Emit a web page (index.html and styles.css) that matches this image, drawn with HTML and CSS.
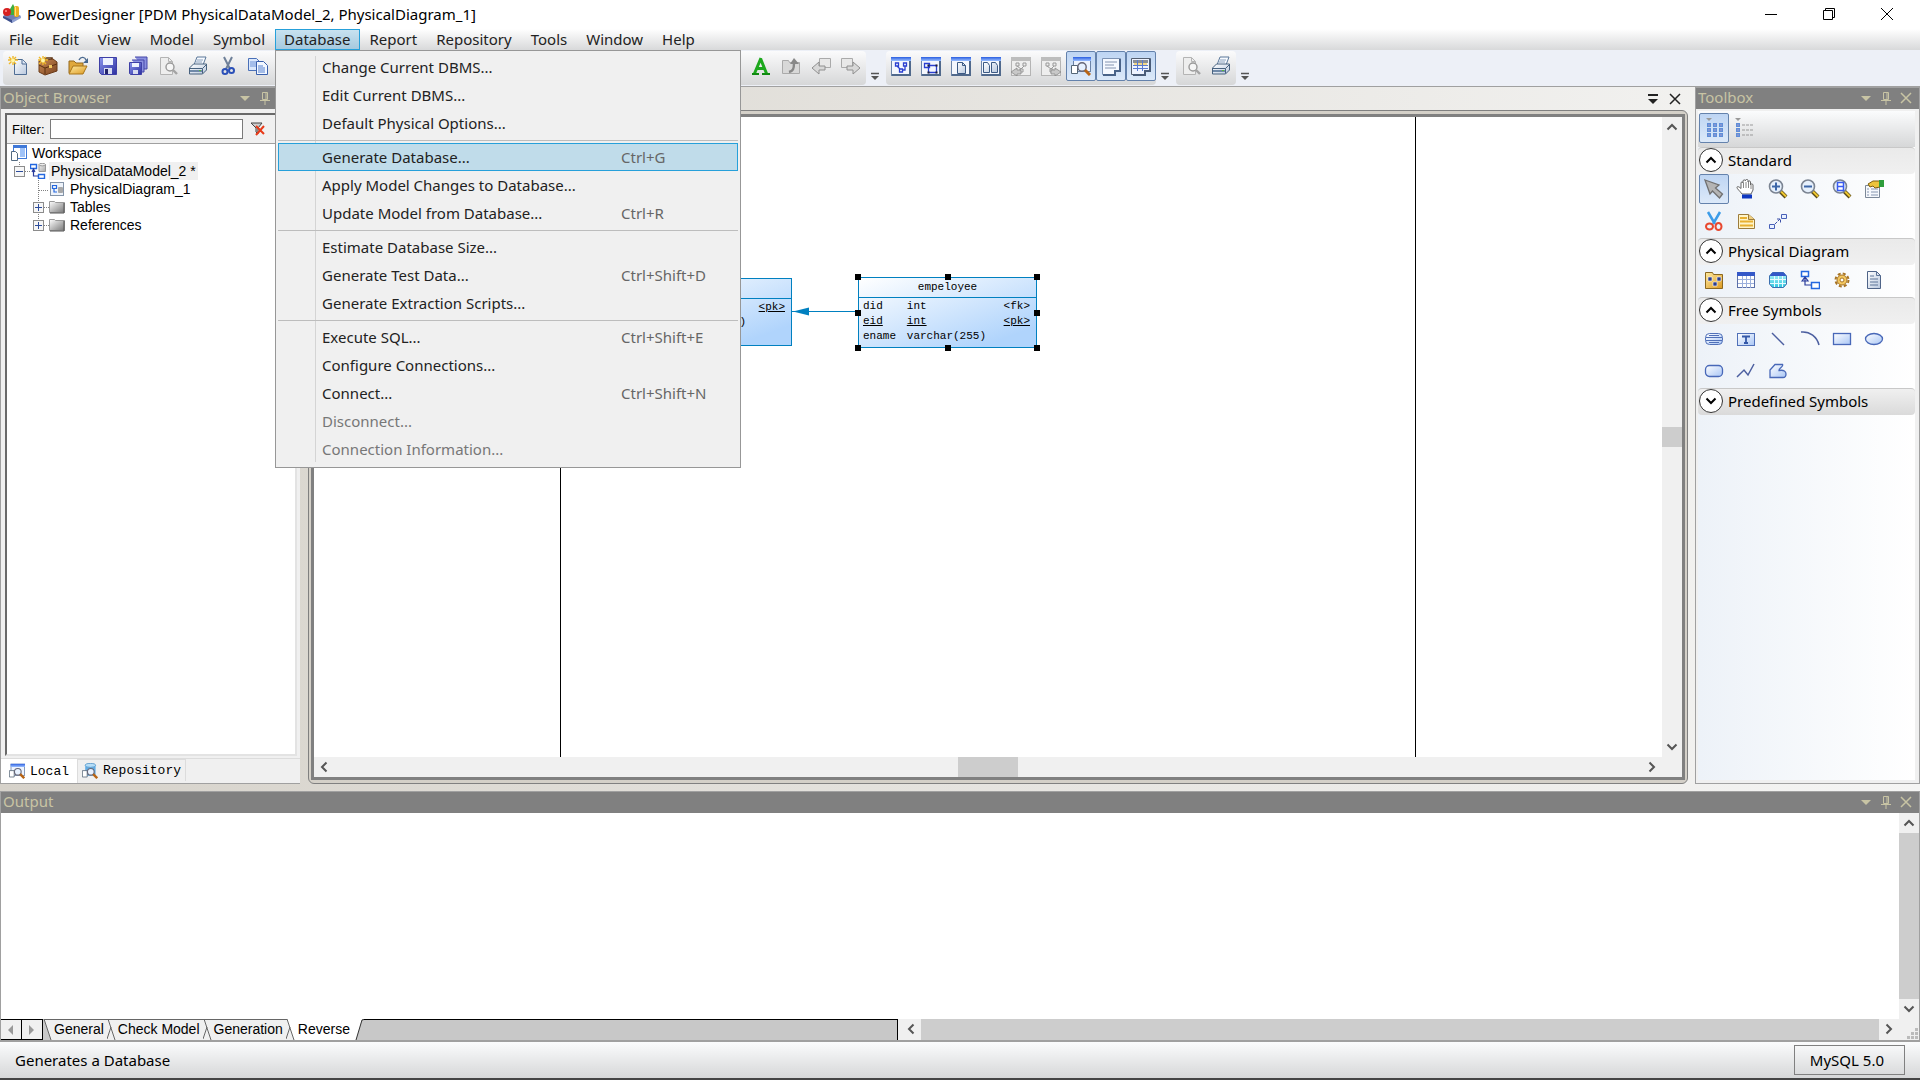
FILE: index.html
```html
<!DOCTYPE html>
<html lang="en">
<head>
	<meta charset="utf-8">
	<meta name="viewport" content="width=device-width,initial-scale=1">
	<title>PowerDesigner [PDM PhysicalDataModel_2, PhysicalDiagram_1]</title>
	<link rel="stylesheet" href="styles.css">
</head>
<body>

	<!-- icon sprite -->
	<svg class="sprite" width="0" height="0" aria-hidden="true">
		<defs>
			<linearGradient id="g-page" x1="0" y1="0" x2="1" y2="1"><stop offset="0" stop-color="#fff"/><stop offset="1" stop-color="#b9c8de"/></linearGradient>
			<linearGradient id="g-blue" x1="0" y1="0" x2="0" y2="1"><stop offset="0" stop-color="#2a5ee0"/><stop offset="1" stop-color="#9cc0ff"/></linearGradient>
			<linearGradient id="g-gold" x1="0" y1="0" x2="1" y2="1"><stop offset="0" stop-color="#ffeaa0"/><stop offset="1" stop-color="#dc9a22"/></linearGradient>
			<linearGradient id="g-brown" x1="0" y1="0" x2="1" y2="1"><stop offset="0" stop-color="#c98a55"/><stop offset="1" stop-color="#7c4420"/></linearGradient>
			<linearGradient id="g-grey" x1="0" y1="0" x2="1" y2="1"><stop offset="0" stop-color="#f4f4f4"/><stop offset="1" stop-color="#a8a8a8"/></linearGradient>
			<linearGradient id="g-disk" x1="0" y1="0" x2="1" y2="1"><stop offset="0" stop-color="#8b95ee"/><stop offset="1" stop-color="#2b2fa0"/></linearGradient>
			<linearGradient id="g-shape" x1="0" y1="0" x2="1" y2="1"><stop offset="0" stop-color="#fff"/><stop offset="1" stop-color="#a9c6f5"/></linearGradient>
			<linearGradient id="g-folder" x1="0" y1="0" x2="1" y2="1"><stop offset="0" stop-color="#fff"/><stop offset="1" stop-color="#777"/></linearGradient>
			<linearGradient id="g-cyan" x1="0" y1="0" x2="0" y2="1"><stop offset="0" stop-color="#b8f4fa"/><stop offset="1" stop-color="#2fc8e0"/></linearGradient>
		</defs>

		<symbol id="i-app" viewBox="0 0 20 20">
			<path d="M1 12l8-5 10 5-9 7z" fill="#6f7fb4"/>
			<path d="M1 12l9 4v3l-9-5z" fill="#3d4f8c"/>
			<path d="M10 16l9-4v2l-9 5z" fill="#8fa0d0"/>
			<path d="M8 5l3-5 3 6-2 5H8z" fill="#3fae3f"/>
			<rect x="12" y="2" width="5" height="11" rx="2" fill="#f0b020"/>
			<path d="M13 3h1v9h-1z" fill="#ffe080"/>
			<circle cx="5" cy="8" r="4" fill="#d62020"/>
			<circle cx="4" cy="7" r="1" fill="#ff9090"/>
		</symbol>
		<symbol id="i-star" viewBox="0 0 20 20">
			<path d="M5 0v9M0 4h10M1 1l7 7M8 1l-7 7" stroke="#f0b828" stroke-width="1.4"/>
			<circle cx="5" cy="4.500" r="2" fill="#fff6a8"/>
		</symbol>
		<symbol id="i-new" viewBox="0 0 20 20">
			<path d="M6.500 3.500h8l4 4v11h-12z" fill="url(#g-page)" stroke="#4f6d94"/>
			<path d="M14 3.500v4.500h4.500" fill="#dfe8f6" stroke="#4f6d94"/>
			<use href="#i-star"/>
		</symbol>
		<symbol id="i-case" viewBox="0 0 20 20">
			<path d="M7 4V2h7v2" fill="none" stroke="#5a3010" stroke-width="1.500"/>
			<path d="M1 5l14-2 4 3v9l-12 4-6-3z" fill="url(#g-brown)" stroke="#6a3a18"/>
			<path d="M1 9l6 3 12-4M7 12v6" stroke="#5a3010" fill="none"/>
			<rect x="11" y="9" width="3" height="3" fill="#f2c860"/>
			<use href="#i-star"/>
		</symbol>
		<symbol id="i-open" viewBox="0 0 20 20">
			<path d="M1 17V5h5l2 2h7v3" fill="#e0a83c" stroke="#94691c"/>
			<path d="M1 18l4-8h14l-4 8z" fill="url(#g-gold)" stroke="#a87418"/>
			<path d="M11 4c2-4 6-3 7 0" fill="none" stroke="#49688e" stroke-width="1.400"/>
			<path d="M20 2v5h-5z" fill="#49688e"/>
		</symbol>
		<symbol id="i-save" viewBox="0 0 20 20">
			<path d="M1.500 1.500h17v17h-15l-2-2z" fill="url(#g-disk)" stroke="#3e3fa6"/>
			<rect x="5" y="2" width="10" height="7" fill="#eef2ff"/>
			<rect x="6" y="12" width="8" height="6" fill="#d8dcf0"/>
			<rect x="7" y="13" width="3" height="5" fill="#23246c"/>
		</symbol>
		<symbol id="i-saveall" viewBox="0 0 20 20">
			<path d="M7 1h12v12h-3M4 4h12v12h-3" fill="#8a90e0" stroke="#4446a8"/>
			<path d="M1.500 6.500h12v12h-11l-1-1z" fill="url(#g-disk)" stroke="#3e3fa6"/>
			<rect x="4" y="7" width="7" height="4" fill="#eef2ff"/>
			<rect x="5" y="14" width="5" height="4" fill="#d8dcf0"/>
		</symbol>
		<symbol id="i-preview" viewBox="0 0 20 20">
			<path d="M2.500 1.500h8l4 4v13h-12z" fill="#eee" stroke="#b4b4b4"/>
			<path d="M10.500 1.500v4h4" fill="none" stroke="#b4b4b4"/>
			<circle cx="12" cy="11" r="4" fill="#f6f6f6" stroke="#999" stroke-width="1.400"/>
			<path d="M15 14l4 4" stroke="#a4a4a4" stroke-width="2.400"/>
		</symbol>
		<symbol id="i-print" viewBox="0 0 20 20">
			<path d="M6 9l3-8h9l-3 8z" fill="#f7faff" stroke="#5a7799"/>
			<path d="M9 4h6M8 6h6" stroke="#8aa0bc"/>
			<path d="M1.500 12l4-4h13v6l-4 4h-13z" fill="url(#g-page)" stroke="#48627f"/>
			<path d="M1.500 12.500h13l4-4M14.500 12.500v5" fill="none" stroke="#48627f"/>
			<path d="M2 15h12" stroke="#6f89a8" stroke-width="2"/>
			<rect x="11" y="14" width="2" height="1" fill="#58b838"/>
		</symbol>
		<symbol id="i-cut" viewBox="0 0 20 20">
			<path d="M6 1l6 12M14 1L8 13" stroke="#6f8099" stroke-width="2"/>
			<circle cx="7" cy="15.500" r="2.500" fill="none" stroke="#2b50b8" stroke-width="2"/>
			<circle cx="13.500" cy="14.500" r="2.500" fill="none" stroke="#2b50b8" stroke-width="2"/>
		</symbol>
		<symbol id="i-copy" viewBox="0 0 20 20">
			<path d="M.5 2.500h8l3 3v9H.5z" fill="#dbe8fc" stroke="#4a70b8"/>
			<path d="M2 6h6M2 8h6M2 10h6" stroke="#6d92d8"/>
			<path d="M8.500 5.500h7l4 4v9h-11z" fill="#f2f7ff" stroke="#3a60ac"/>
			<path d="M10 10h5M10 12h7M10 14h7M10 16h7" stroke="#5580d0"/>
		</symbol>
		<symbol id="i-font" viewBox="0 0 20 20">
			<path d="M10 2L3.500 17.500M9.500 2.500l6 15M6 12.500h8" stroke="#1da81d" stroke-width="3" fill="none"/>
			<path d="M1 18h7M11 18h8" stroke="#118a11" stroke-width="2"/>
		</symbol>
		<symbol id="i-up" viewBox="0 0 20 20">
			<path d="M1.500 4.500h6l1 2h10v11h-17z" fill="#d8d8d8" stroke="#aaa"/>
			<path d="M8 16c4-1 5-3 5-9" fill="none" stroke="#888" stroke-width="2.400"/>
			<path d="M9 8l4-6 5 6z" fill="#888"/>
		</symbol>
		<symbol id="i-back" viewBox="0 0 20 20">
			<path d="M8.500 2.500h11v9h-11z" fill="#e8e8e8" stroke="#aaa"/>
			<path d="M1 12l7-6v4h6v4H8v4z" fill="#d8d8d8" stroke="#909090"/>
		</symbol>
		<symbol id="i-fwd" viewBox="0 0 20 20">
			<path d="M.5 2.500h11v9H.5z" fill="#e8e8e8" stroke="#aaa"/>
			<path d="M19 12l-7-6v4H6v4h6v4z" fill="#d8d8d8" stroke="#909090"/>
		</symbol>
		<symbol id="i-win" viewBox="0 0 20 20">
			<rect x=".5" y="1.500" width="19" height="18" fill="#f4f7fd" stroke="#6c84a8"/>
			<rect x="0" y="1" width="20" height="4" fill="url(#g-blue)"/>
			<path d="M19 5v14H1" fill="none" stroke="#50698c" stroke-width="2"/>
		</symbol>
		<symbol id="i-winoff" viewBox="0 0 20 20">
			<rect x=".5" y="1.500" width="19" height="18" fill="#eee" stroke="#b4b4b4"/>
			<rect x="0" y="1" width="20" height="4" fill="#bdbdbd"/>
			<path d="M5 7h3v3H5zM12 7h3v3h-3zM9 13h3v3H9zM6 10l4 3 3-3" fill="none" stroke="#999"/>
		</symbol>
		<symbol id="i-dgm" viewBox="0 0 20 20"><use href="#i-win"/><path d="M4.500 7h3v3h-3zM12.500 7h3v3h-3zM8.500 13h3v3h-3zM6 10l3 3M14 10v4h-2" fill="none" stroke="#2a3fd0" stroke-width="1.300"/></symbol>
		<symbol id="i-dgmsel" viewBox="0 0 20 20"><use href="#i-win"/><path d="M3.500 7.500h5v4h-5zM7.500 9.500h8v7h-8z" fill="none" stroke="#2a3fd0" stroke-width="1.300"/><path d="M6.500 8.500h2v2h-2zM14.500 8.500h2v2h-2zM6.500 15.500h2v2h-2zM14.500 15.500h2v2h-2z" fill="#223"/></symbol>
		<symbol id="i-dgmpage" viewBox="0 0 20 20"><use href="#i-win"/><path d="M6.500 6.500h5l3 3v8h-8z" fill="url(#g-page)" stroke="#3c5a84"/><path d="M11.500 6.500v3h3" fill="none" stroke="#3c5a84"/></symbol>
		<symbol id="i-dgmpages" viewBox="0 0 20 20"><use href="#i-win"/><path d="M2.500 6.500h4l2 3v7h-6zM10.500 6.500h4l2 3v7h-6z" fill="url(#g-page)" stroke="#3c5a84"/></symbol>
		<symbol id="i-prevoff" viewBox="0 0 20 20"><use href="#i-winoff"/><path d="M0 16l6-4v2h4v4H6v2z" fill="#c8c8c8" stroke="#888" stroke-width=".8"/></symbol>
		<symbol id="i-nextoff" viewBox="0 0 20 20"><use href="#i-winoff"/><path d="M20 16l-6-4v2h-4v4h4v2z" fill="#c8c8c8" stroke="#888" stroke-width=".8"/></symbol>
		<symbol id="i-browse" viewBox="0 0 20 20">
			<rect x="2.500" y="1.500" width="17" height="14" fill="#eef4ff" stroke="#6c84a8"/>
			<rect x="2" y="1" width="18" height="4" fill="url(#g-blue)"/>
			<path d="M.5 9.500h6v8h-6z" fill="#fff" stroke="#567"/>
			<circle cx="11" cy="11" r="4.200" fill="#e8f2ff" stroke="#667" stroke-width="1.400"/>
			<path d="M14 14l5 5" stroke="#b86414" stroke-width="3"/>
		</symbol>
		<symbol id="i-repo" viewBox="0 0 20 20">
			<path d="M4 3v13h13V3z" fill="#62aee6"/>
			<ellipse cx="10.500" cy="3" rx="6.500" ry="2.500" fill="#b6def8" stroke="#4a90c8"/>
			<path d="M.5 9.500h6v8h-6z" fill="#fff" stroke="#567"/>
			<circle cx="11" cy="11" r="4.200" fill="#e8f2ff" stroke="#667" stroke-width="1.400"/>
			<path d="M14 14l5 5" stroke="#b86414" stroke-width="3"/>
		</symbol>
		<symbol id="i-output" viewBox="0 0 20 20">
			<path d="M1.500 2.500h18v13h-5v3h-13z" fill="#f6f9ff" stroke="#7d93b4"/>
			<path d="M19 3v12h-5v4H2" fill="none" stroke="#4a6388" stroke-width="2"/>
			<path d="M4 6h12M4 9h9M4 12h11" stroke="#8494b0"/>
		</symbol>
		<symbol id="i-result" viewBox="0 0 20 20">
			<path d="M.5 2.500h19v13h-5v3H.5z" fill="#eef3ff" stroke="#555f70"/>
			<path d="M19 3v12h-5v4H2" fill="none" stroke="#4a5c78" stroke-width="2"/>
			<rect x="2" y="4" width="15" height="3" fill="#8a8f98"/>
			<path d="M2 9.500h15M2 12.500h15M6.500 4v11M11.500 4v11" stroke="#5b7bd0"/>
			<path d="M3 7h3v2H3zM7 7h4v2H7zM12 7h4v2h-4z" fill="#f4d888"/>
		</symbol>
		<symbol id="i-more" viewBox="0 0 10 10"><path d="M1 1.500h8" stroke="#555" stroke-width="1.500"/><path d="M1 4h8L5 8z" fill="#555"/></symbol>
		<symbol id="i-down" viewBox="0 0 12 12"><path d="M1 4h10L6 9z" fill="#c8c4a4"/></symbol>
		<symbol id="i-pin" viewBox="0 0 12 14"><path d="M3.500 1.500h5v7h-5zM1 9.500h10M6 10v4M7 2v6" fill="none" stroke="#c8c4a4"/></symbol>
		<symbol id="i-x" viewBox="0 0 12 12"><path d="M1 1l10 10M11 1L1 11" fill="none" stroke="currentColor" stroke-width="1.500"/></symbol>
		<symbol id="i-chev" viewBox="0 0 12 12"><path d="M1.500 8.500L6 4l4.500 4.500" fill="none" stroke="currentColor" stroke-width="2"/></symbol>

		<symbol id="i-workspace" viewBox="0 0 16 16">
			<rect x="2.500" y=".5" width="13" height="13" fill="#fff" stroke="#3f78d8"/>
			<rect x="2" y="0" width="14" height="3" fill="#3f78d8"/>
			<rect x="9" y="3" width="5" height="9" fill="#9fc2f8"/>
			<path d="M.5 6.500h4l2 2v7h-6z" fill="#fff" stroke="#546a80"/>
		</symbol>
		<symbol id="i-pdm" viewBox="0 0 16 16">
			<path d="M.5 1.500h6v4h-6zM8.500 11.500h6v4h-6z" fill="#fff" stroke="#2468e0" stroke-width="1.400"/>
			<path d="M3.500 6v7h5M2 9l1.500-3L5 9" fill="none" stroke="#2a3c9c" stroke-width="1.200"/>
			<path d="M9 1.500h6.500v7H9z" fill="url(#g-grey)" stroke="#999"/>
			<ellipse cx="12.200" cy="1.600" rx="3.200" ry="1.300" fill="#eee" stroke="#999"/>
		</symbol>
		<symbol id="i-diagram" viewBox="0 0 16 16">
			<rect x="1.500" y="1.500" width="13" height="13" fill="#eef3fa" stroke="#8494a8"/>
			<path d="M3.500 4.500h4v3h-4zM5 8v3h3" fill="none" stroke="#2468e0" stroke-width="1.200"/>
			<rect x="9" y="6" width="5" height="6" rx="1" fill="#a8a8a8"/>
		</symbol>
		<symbol id="i-folder" viewBox="0 0 16 16"><path d="M.5 13.500v-11h5l1 1h9v10z" fill="url(#g-folder)" stroke="#999"/><path d="M15 4v10H1" stroke="#555" fill="none"/></symbol>
		<symbol id="i-funnel" viewBox="0 0 16 16">
			<path d="M1 2h11L8 7v6l-2-2V7z" fill="#ccc" stroke="#444"/>
			<path d="M6 5l8 8M14 5l-8 9" stroke="#e83a18" stroke-width="2"/>
		</symbol>
		<symbol id="t-minus" viewBox="0 0 19 18">
			<path d="M8.500 0v4M14 9.500h5" stroke="#808080" stroke-dasharray="1 1"/>
			<rect x="3.500" y="4.500" width="10" height="10" fill="#f6f6f6" stroke="#8c8c8c"/>
			<path d="M5 9.500h7" stroke="#2c4c9c"/>
		</symbol>
		<symbol id="t-plus" viewBox="0 0 19 18">
			<path d="M8.500 0v18M14 9.500h5" stroke="#808080" stroke-dasharray="1 1"/>
			<rect x="3.500" y="4.500" width="10" height="10" fill="#f6f6f6" stroke="#8c8c8c"/>
			<path d="M5 9.500h7M8.500 6v7" stroke="#2c4c9c"/>
		</symbol>
		<symbol id="t-last" viewBox="0 0 19 18">
			<path d="M8.500 0v4M14 9.500h5" stroke="#808080" stroke-dasharray="1 1"/>
			<rect x="3.500" y="4.500" width="10" height="10" fill="#f6f6f6" stroke="#8c8c8c"/>
			<path d="M5 9.500h7M8.500 6v7" stroke="#2c4c9c"/>
		</symbol>
		<symbol id="t-line" viewBox="0 0 19 18"><path d="M8.500 0v18M9 10.500h10" stroke="#808080" stroke-dasharray="1 1"/></symbol>

		<symbol id="i-icons" viewBox="0 0 20 20">
			<path d="M2 0h6L5 3z" fill="#999"/>
			<path d="M3 5h4v4H3zM9 5h4v4H9zM15 5h4v4h-4zM3 10h4v4H3zM9 10h4v4H9zM15 10h4v4h-4zM3 15h4v4H3zM9 15h4v4H9zM15 15h4v4h-4z" fill="#5f8fd8"/>
			<path d="M4.500 6.500h1v1h-1zM10.500 6.500h1v1h-1zM16.500 6.500h1v1h-1zM4.500 11.500h1v1h-1zM10.500 11.500h1v1h-1zM16.500 11.500h1v1h-1zM4.500 16.500h1v1h-1zM10.500 16.500h1v1h-1zM16.500 16.500h1v1h-1z" fill="#f0a8c8"/>
		</symbol>
		<symbol id="i-list" viewBox="0 0 20 20">
			<path d="M0 0h6L3 3z" fill="#999"/>
			<path d="M1 5h4v4H1zM1 10h4v4H1zM1 15h4v4H1z" fill="#5f8fd8"/>
			<path d="M2.500 6.500h1v1h-1zM2.500 11.500h1v1h-1zM2.500 16.500h1v1h-1z" fill="#f0a8c8"/>
			<path d="M7 7h12M7 12h12M7 17h12" stroke="#999" stroke-dasharray="3 1"/>
		</symbol>
		<symbol id="i-pointer" viewBox="0 0 20 20"><path d="M1 1l14 5-3.500 3 7 6-3 4-7-7L6 15z" fill="#b4b4b4" stroke="#707070" stroke-width="1.300"/></symbol>
		<symbol id="i-hand" viewBox="0 0 20 20">
			<path d="M6 15c-2-3-5-5-5-6.500s2-1 4 1V4c0-1.500 2-1.500 2 0V2c0-1.500 2.500-1.500 2.500 0v-.5c0-1.500 2.500-1.500 2.500 0V3c0-1.500 2.500-1.500 2.500 0v3c0-1.500 2.500-1.500 2.500 0v5l-2 4z" fill="#fff" stroke="#666"/>
			<path d="M7.500 4v5M10 3v6M12.500 3v6M15 6v4" stroke="#888"/>
			<rect x="6" y="15.500" width="10" height="4" fill="#1038c0"/>
		</symbol>
		<symbol id="i-glass" viewBox="0 0 20 20">
			<path d="M12 12l6 6" stroke="#5a4a18" stroke-width="4"/><path d="M13 12.500l5 5" stroke="#f0c830" stroke-width="2"/>
			<circle cx="8" cy="7.500" r="6.500" fill="#e6f0fc" stroke="#7b8492" stroke-width="1.600"/>
		</symbol>
		<symbol id="i-zin" viewBox="0 0 20 20"><use href="#i-glass"/><path d="M4 7.500h8M8 3.500v8" stroke="#3c66a8" stroke-width="2"/></symbol>
		<symbol id="i-zout" viewBox="0 0 20 20"><use href="#i-glass"/><path d="M4 7.500h8" stroke="#3c66a8" stroke-width="2"/></symbol>
		<symbol id="i-zpage" viewBox="0 0 20 20"><use href="#i-glass"/><path d="M5.500 3.500h6v8h-6zM5.500 7.500h6" stroke="#3a5cf0" stroke-width="1.500" fill="#fff"/></symbol>
		<symbol id="i-props" viewBox="0 0 20 20">
			<path d="M1.500 6.500h14v12h-14z" fill="#f6f8fc" stroke="#7c8898"/>
			<path d="M3 10h2M7 10h7M3 13h2M7 13h7M3 16h2M7 16h7" stroke="#8696b0"/>
			<path d="M4 5l5-3 7 0v6l-5 1-2-2-3 1z" fill="#ecc43c" stroke="#806010"/>
			<path d="M15 1h5v7h-5z" fill="#2f9e3c"/>
		</symbol>
		<symbol id="i-delete" viewBox="0 0 20 20">
			<path d="M4 1l7 12M16 1L9 13" stroke="#3c9ce8" stroke-width="2.500"/>
			<ellipse cx="5.500" cy="15.500" rx="3.500" ry="3" fill="none" stroke="#e84830" stroke-width="2"/>
			<ellipse cx="14.500" cy="15.500" rx="3" ry="3.500" fill="none" stroke="#e84830" stroke-width="2"/>
		</symbol>
		<symbol id="i-note" viewBox="0 0 20 20">
			<path d="M2.500 3.500h10l6 5v9h-16z" fill="#fff4c8" stroke="#9c7c3c"/>
			<path d="M12.500 3.500v5h6" fill="#f0d080" stroke="#9c7c3c"/>
			<path d="M4 7h7M4 10.500h13M4 14.500h13" stroke="#e8b030" stroke-width="2"/>
		</symbol>
		<symbol id="i-link" viewBox="0 0 20 20"><path d="M1.500 13.500h5v4h-5zM13.500 3.500h5v4h-5z" fill="#e8f0ff" stroke="#4860b8"/><path d="M7 13l5-5M9 8h3.500v3.500" fill="none" stroke="#3c50a8" stroke-dasharray="3 1"/></symbol>
		<symbol id="i-package" viewBox="0 0 20 20">
			<path d="M1.500 18.500v-16h7l1 2h9v14z" fill="url(#g-gold)" stroke="#8c6820"/>
			<path d="M4 7h4v4H4zM13 7h4v4h-4zM9 12h4v4H9z" fill="#2c3c8c" stroke="#fff" stroke-width=".6"/>
		</symbol>
		<symbol id="i-table" viewBox="0 0 20 20">
			<rect x="1.500" y="2.500" width="17" height="15" fill="#fff" stroke="#5c70a8"/>
			<rect x="1" y="2" width="18" height="4" fill="#3458c8"/>
			<path d="M2 9.500h16M2 13.500h16M6.500 6v12M10.500 6v12M14.500 6v12" stroke="#9cb0dc"/>
		</symbol>
		<symbol id="i-view" viewBox="0 0 20 20">
			<path d="M1.500 6l3-3.500h11l3 3.500v8l-3 3.500h-11l-3-3.500z" fill="url(#g-cyan)" stroke="#3c70b0"/>
			<path d="M1.500 6l3-3.500h11l3 3.500z" fill="#3458c8"/>
			<path d="M2 9.500h16M2 13.500h16M6.500 6v11M10.500 6v11M14.500 6v11" stroke="#e8fcff"/>
		</symbol>
		<symbol id="i-ref" viewBox="0 0 20 20">
			<path d="M1.500 1.500h7v5h-7zM11.500 12.500h8v6h-8z" fill="#fff" stroke="#2468e0" stroke-width="1.500"/>
			<path d="M5 7v8h6M2 11l3-4 3 4z" fill="none" stroke="#2a3c9c" stroke-width="1.200"/>
		</symbol>
		<symbol id="i-proc" viewBox="0 0 20 20">
			<circle cx="10" cy="10" r="6.500" fill="none" stroke="#a87424" stroke-width="2" stroke-dasharray="3 2.100"/>
			<circle cx="10" cy="10" r="5" fill="#f4c860" stroke="#a87424"/>
			<circle cx="10" cy="10" r="2" fill="#fff" stroke="#a87424"/>
		</symbol>
		<symbol id="i-file" viewBox="0 0 20 20">
			<path d="M3.500 1.500h9l4 4v13h-13z" fill="url(#g-page)" stroke="#4f6488"/>
			<path d="M12.500 1.500v4h4M6 6h4M6 9h8M6 12h8M6 15h8" fill="none" stroke="#5c7498"/>
		</symbol>
		<symbol id="i-title" viewBox="0 0 20 20">
			<rect x="1.500" y="4.500" width="17" height="11" rx="4" fill="url(#g-shape)" stroke="#5070b8"/>
			<path d="M2 8.500h16M2 11.500h16M5 6.500h10M5 13.500h10" stroke="#5070b8"/>
		</symbol>
		<symbol id="i-text" viewBox="0 0 20 20"><rect x="1.500" y="4.500" width="17" height="12" fill="url(#g-shape)" stroke="#5070b8"/><path d="M6 7.500h8M10 7.500v7M8 14h4" stroke="#3458a8" stroke-width="1.800"/></symbol>
		<symbol id="i-line" viewBox="0 0 20 20"><path d="M4 4l12 12" stroke="#4c5fa0" stroke-width="1.500"/></symbol>
		<symbol id="i-arc" viewBox="0 0 20 20"><path d="M1 3c9-1 16 5 18 13" fill="none" stroke="#4c5fa0" stroke-width="1.500"/></symbol>
		<symbol id="i-rect" viewBox="0 0 20 20"><rect x="1.500" y="4.500" width="17" height="11" fill="url(#g-shape)" stroke="#4868b8" stroke-width="1.300"/></symbol>
		<symbol id="i-ell" viewBox="0 0 20 20"><ellipse cx="10" cy="10" rx="8.500" ry="5.500" fill="url(#g-shape)" stroke="#4868b8" stroke-width="1.300"/></symbol>
		<symbol id="i-rrect" viewBox="0 0 20 20"><rect x="1.500" y="4.500" width="17" height="11" rx="4" fill="url(#g-shape)" stroke="#4868b8" stroke-width="1.300"/></symbol>
		<symbol id="i-poly" viewBox="0 0 20 20"><path d="M1 16l7-7 4 5 6-11" fill="none" stroke="#4c5fa0" stroke-width="1.500"/></symbol>
		<symbol id="i-polygon" viewBox="0 0 20 20"><path d="M2 16.500V9l5-5.500h7.500c1.500 2-3.500 3-3.500 6 5-1 7 1 7 3.500s-1 3.500-3 3.500z" fill="url(#g-shape)" stroke="#4868b8" stroke-width="1.300"/></symbol>
	</svg>

	<header class="titlebar">
		<svg class="ico"><use href="#i-app"/></svg>
		<h1>PowerDesigner [PDM PhysicalDataModel_2, PhysicalDiagram_1]</h1>
		<div class="window-buttons">
			<button aria-label="Minimize"><svg width="12" height="12"><path d="M0 6.500h12" stroke="#000"/></svg></button>
			<button aria-label="Restore"><svg width="12" height="12" fill="none" stroke="#000"><path d="M.5 2.500h9v9h-9zM2.500 2.500v-2h9v9h-2"/></svg></button>
			<button aria-label="Close"><svg width="12" height="12"><path d="M0 0l12 12M12 0L0 12" stroke="#000"/></svg></button>
		</div>
	</header>

	<nav class="menubar">
		<button>File</button>
		<button>Edit</button>
		<button>View</button>
		<button>Model</button>
		<button>Symbol</button>
		<div class="menu-holder">
			<button class="open">Database</button>
			<div class="menu">
				<button>Change Current DBMS...</button>
				<button>Edit Current DBMS...</button>
				<button>Default Physical Options...</button>
				<hr>
				<button class="hot">Generate Database...<kbd>Ctrl+G</kbd></button>
				<button>Apply Model Changes to Database...</button>
				<button>Update Model from Database...<kbd>Ctrl+R</kbd></button>
				<hr>
				<button>Estimate Database Size...</button>
				<button>Generate Test Data...<kbd>Ctrl+Shift+D</kbd></button>
				<button>Generate Extraction Scripts...</button>
				<hr>
				<button>Execute SQL...<kbd>Ctrl+Shift+E</kbd></button>
				<button>Configure Connections...</button>
				<button>Connect...<kbd>Ctrl+Shift+N</kbd></button>
				<button disabled>Disconnect...</button>
				<button disabled>Connection Information...</button>
			</div>
		</div>
		<button>Report</button>
		<button>Repository</button>
		<button>Tools</button>
		<button>Window</button>
		<button>Help</button>
	</nav>

	<div class="toolbars">
		<div class="toolbar toolbar-main">
			<div class="tools">
				<button aria-label="New Model"><svg class="ico"><use href="#i-new"/></svg></button>
				<button aria-label="New Project"><svg class="ico"><use href="#i-case"/></svg></button>
				<button aria-label="Open"><svg class="ico"><use href="#i-open"/></svg></button>
				<button aria-label="Save"><svg class="ico"><use href="#i-save"/></svg></button>
				<button aria-label="Save All"><svg class="ico"><use href="#i-saveall"/></svg></button>
				<button aria-label="Print Preview"><svg class="ico"><use href="#i-preview"/></svg></button>
				<button aria-label="Print"><svg class="ico"><use href="#i-print"/></svg></button>
				<button aria-label="Cut"><svg class="ico"><use href="#i-cut"/></svg></button>
				<button aria-label="Copy"><svg class="ico"><use href="#i-copy"/></svg></button>
			</div>
			<div class="tools">
				<button aria-label="Font"><svg class="ico"><use href="#i-font"/></svg></button>
				<button aria-label="Up One Level"><svg class="ico"><use href="#i-up"/></svg></button>
				<button aria-label="Back"><svg class="ico"><use href="#i-back"/></svg></button>
				<button aria-label="Forward"><svg class="ico"><use href="#i-fwd"/></svg></button>
			</div>
		</div>
		<button class="more" aria-label="Toolbar options"><svg width="10" height="10"><use href="#i-more"/></svg></button>
		<div class="toolbar">
			<button aria-label="Diagram"><svg class="ico"><use href="#i-dgm"/></svg></button>
			<button aria-label="Selection"><svg class="ico"><use href="#i-dgmsel"/></svg></button>
			<button aria-label="Page"><svg class="ico"><use href="#i-dgmpage"/></svg></button>
			<button aria-label="Pages"><svg class="ico"><use href="#i-dgmpages"/></svg></button>
			<button aria-label="Previous View"><svg class="ico"><use href="#i-prevoff"/></svg></button>
			<button aria-label="Next View"><svg class="ico"><use href="#i-nextoff"/></svg></button>
			<button class="on" aria-label="Browser"><svg class="ico"><use href="#i-browse"/></svg></button>
			<button class="on" aria-label="Output"><svg class="ico"><use href="#i-output"/></svg></button>
			<button class="on" aria-label="Result List"><svg class="ico"><use href="#i-result"/></svg></button>
		</div>
		<button class="more" aria-label="Toolbar options"><svg width="10" height="10"><use href="#i-more"/></svg></button>
		<div class="toolbar">
			<button aria-label="Print Preview"><svg class="ico"><use href="#i-preview"/></svg></button>
			<button aria-label="Print"><svg class="ico"><use href="#i-print"/></svg></button>
		</div>
		<button class="more" aria-label="Toolbar options"><svg width="10" height="10"><use href="#i-more"/></svg></button>
	</div>

	<main class="workspace">
		<section class="browser">
			<div class="panel-head">
				<h2>Object Browser</h2>
				<button aria-label="Menu"><svg width="12" height="12"><use href="#i-down"/></svg></button>
				<button aria-label="Pin"><svg width="12" height="14"><use href="#i-pin"/></svg></button>
				<button aria-label="Close"><svg width="12" height="12"><use href="#i-x"/></svg></button>
			</div>
			<div class="browser-body">
				<div class="filter">
					<label for="filter">Filter:</label>
					<input type="text" id="filter">
					<button aria-label="Clear filter"><svg width="16" height="16"><use href="#i-funnel"/></svg></button>
				</div>
				<ul class="tree">
					<li><svg width="16" height="16"><use href="#i-workspace"/></svg><span>Workspace</span></li>
					<li><svg width="19" height="18"><use href="#t-minus"/></svg><svg width="16" height="16"><use href="#i-pdm"/></svg><span class="current">PhysicalDataModel_2 *</span></li>
					<li class="child"><svg width="19" height="18"><use href="#t-line"/></svg><svg width="16" height="16"><use href="#i-diagram"/></svg><span>PhysicalDiagram_1</span></li>
					<li class="child"><svg width="19" height="18"><use href="#t-plus"/></svg><svg width="16" height="16"><use href="#i-folder"/></svg><span>Tables</span></li>
					<li class="child"><svg width="19" height="18"><use href="#t-last"/></svg><svg width="16" height="16"><use href="#i-folder"/></svg><span>References</span></li>
				</ul>
			</div>
			<div class="browser-tabs">
				<button class="active"><svg width="16" height="16"><use href="#i-browse"/></svg>Local</button>
				<button><svg width="16" height="16"><use href="#i-repo"/></svg>Repository</button>
			</div>
		</section>

		<section class="document">
			<div class="doc-head">
				<button aria-label="Windows"><svg width="12" height="12"><path d="M1 2h10" stroke="#222" stroke-width="2"/><path d="M1 6h10l-5 5z" fill="#222"/></svg></button>
				<button aria-label="Close"><svg width="12" height="12"><use href="#i-x"/></svg></button>
			</div>
			<div class="frame">
				<div class="view">
					<div class="canvas">
						<div class="page-line line-left"></div>
						<div class="page-line line-right"></div>
						<svg class="reference" width="66" height="10"><path d="M0 5.500h66" stroke="#0080c0"/><path d="M1 5.500l16-4v8z" fill="#0080c0"/></svg>
						<table class="entity entity-parent">
							<tr><th colspan="2">&nbsp;</th></tr>
							<tr><td></td><td class="key"><u>&lt;pk&gt;</u></td></tr>
							<tr><td class="type">)</td><td></td></tr>
							<tr><td>&nbsp;</td><td></td></tr>
						</table>
						<div class="selected">
							<table class="entity">
								<tr><th colspan="3">empeloyee</th></tr>
								<tr><td>did</td><td>int</td><td class="key">&lt;fk&gt;</td></tr>
								<tr><td><u>eid</u></td><td><u>int</u></td><td class="key"><u>&lt;pk&gt;</u></td></tr>
								<tr><td>ename</td><td>varchar(255)</td><td></td></tr>
							</table>
							<i class="handle t l"></i><i class="handle t c"></i><i class="handle t r"></i>
							<i class="handle m l"></i><i class="handle m r"></i>
							<i class="handle b l"></i><i class="handle b c"></i><i class="handle b r"></i>
						</div>
					</div>
					<div class="vscroll">
						<button aria-label="Scroll up"><svg width="12" height="12"><use href="#i-chev"/></svg></button>
						<div class="track-before"></div>
						<div class="thumb"></div>
						<div class="track-after"></div>
						<button class="turn-down" aria-label="Scroll down"><svg width="12" height="12"><use href="#i-chev"/></svg></button>
					</div>
					<div class="hscroll">
						<button class="turn-left" aria-label="Scroll left"><svg width="12" height="12"><use href="#i-chev"/></svg></button>
						<div class="track-before"></div>
						<div class="thumb"></div>
						<div class="track-after"></div>
						<button class="turn-right" aria-label="Scroll right"><svg width="12" height="12"><use href="#i-chev"/></svg></button>
					</div>
				</div>
			</div>
		</section>

		<section class="toolbox">
			<div class="panel-head">
				<h2>Toolbox</h2>
				<button aria-label="Menu"><svg width="12" height="12"><use href="#i-down"/></svg></button>
				<button aria-label="Pin"><svg width="12" height="14"><use href="#i-pin"/></svg></button>
				<button aria-label="Close"><svg width="12" height="12"><use href="#i-x"/></svg></button>
			</div>
			<div class="toolbox-body">
				<div class="toolbox-views">
					<button class="on" aria-label="Icons"><svg class="ico"><use href="#i-icons"/></svg></button>
					<button aria-label="List"><svg class="ico"><use href="#i-list"/></svg></button>
				</div>
				<button class="group"><span class="round"><svg width="12" height="12"><use href="#i-chev"/></svg></span>Standard</button>
				<div class="palette">
					<button class="on" aria-label="Pointer"><svg class="ico"><use href="#i-pointer"/></svg></button>
					<button aria-label="Grabber"><svg class="ico"><use href="#i-hand"/></svg></button>
					<button aria-label="Zoom In"><svg class="ico"><use href="#i-zin"/></svg></button>
					<button aria-label="Zoom Out"><svg class="ico"><use href="#i-zout"/></svg></button>
					<button aria-label="Global View"><svg class="ico"><use href="#i-zpage"/></svg></button>
					<button aria-label="Properties"><svg class="ico"><use href="#i-props"/></svg></button>
					<button aria-label="Delete"><svg class="ico"><use href="#i-delete"/></svg></button>
					<button aria-label="Note"><svg class="ico"><use href="#i-note"/></svg></button>
					<button aria-label="Link"><svg class="ico"><use href="#i-link"/></svg></button>
				</div>
				<button class="group"><span class="round"><svg width="12" height="12"><use href="#i-chev"/></svg></span>Physical Diagram</button>
				<div class="palette">
					<button aria-label="Package"><svg class="ico"><use href="#i-package"/></svg></button>
					<button aria-label="Table"><svg class="ico"><use href="#i-table"/></svg></button>
					<button aria-label="View"><svg class="ico"><use href="#i-view"/></svg></button>
					<button aria-label="Reference"><svg class="ico"><use href="#i-ref"/></svg></button>
					<button aria-label="Procedure"><svg class="ico"><use href="#i-proc"/></svg></button>
					<button aria-label="File"><svg class="ico"><use href="#i-file"/></svg></button>
				</div>
				<button class="group"><span class="round"><svg width="12" height="12"><use href="#i-chev"/></svg></span>Free Symbols</button>
				<div class="palette">
					<button aria-label="Title"><svg class="ico"><use href="#i-title"/></svg></button>
					<button aria-label="Text"><svg class="ico"><use href="#i-text"/></svg></button>
					<button aria-label="Line"><svg class="ico"><use href="#i-line"/></svg></button>
					<button aria-label="Arc"><svg class="ico"><use href="#i-arc"/></svg></button>
					<button aria-label="Rectangle"><svg class="ico"><use href="#i-rect"/></svg></button>
					<button aria-label="Ellipse"><svg class="ico"><use href="#i-ell"/></svg></button>
					<button aria-label="Rounded Rectangle"><svg class="ico"><use href="#i-rrect"/></svg></button>
					<button aria-label="Polyline"><svg class="ico"><use href="#i-poly"/></svg></button>
					<button aria-label="Polygon"><svg class="ico"><use href="#i-polygon"/></svg></button>
				</div>
				<button class="group closed"><span class="round turn-down"><svg width="12" height="12"><use href="#i-chev"/></svg></span>Predefined Symbols</button>
			</div>
		</section>
	</main>

	<section class="output">
		<div class="panel-head">
			<h2>Output</h2>
			<button aria-label="Menu"><svg width="12" height="12"><use href="#i-down"/></svg></button>
			<button aria-label="Pin"><svg width="12" height="14"><use href="#i-pin"/></svg></button>
			<button aria-label="Close"><svg width="12" height="12"><use href="#i-x"/></svg></button>
		</div>
		<div class="output-body">
			<div class="log"></div>
			<div class="vscroll">
				<button aria-label="Scroll up"><svg width="12" height="12"><use href="#i-chev"/></svg></button>
				<div class="thumb"></div>
				<button class="turn-down" aria-label="Scroll down"><svg width="12" height="12"><use href="#i-chev"/></svg></button>
			</div>
		</div>
		<div class="output-foot">
			<div class="sheet-tabs">
				<button class="step" aria-label="Previous tab"><svg width="8" height="10"><path d="M6 0v10L1 5z" fill="#999"/></svg></button>
				<button class="step" aria-label="Next tab"><svg width="8" height="10"><path d="M1 0v10l5-5z" fill="#999"/></svg></button>
				<svg class="slant" width="9" height="21"><path d="M1 0h8v21H8z" fill="#f0f0f0"/><path d="M1 0l7 21M1 .5h8" fill="none" stroke="#666"/></svg>
				<button class="sheet">General</button>
				<svg class="slant" width="9" height="21"><path d="M0 0h9v21H0z" fill="#f0f0f0"/><path d="M1 0l7 21M0 20l4-12M0 .5h9" fill="none" stroke="#666"/></svg>
				<button class="sheet">Check Model</button>
				<svg class="slant" width="9" height="21"><path d="M0 0h9v21H0z" fill="#f0f0f0"/><path d="M1 0l7 21M0 20l4-12M0 .5h9" fill="none" stroke="#666"/></svg>
				<button class="sheet">Generation</button>
				<svg class="slant" width="9" height="21"><path d="M0 0h2l6 21H0z" fill="#f0f0f0"/><path d="M1 0h8v21H8z" fill="#fff"/><path d="M1 0l7 21M0 20l4-12M0 .5h1" fill="none" stroke="#666"/></svg>
				<button class="sheet active">Reverse</button>
				<svg class="slant" width="9" height="21"><path d="M0 0h7L1 21H0z" fill="#fff"/><path d="M1 21L7 1l2-.5" fill="none" stroke="#333"/></svg>
				<div class="sheet-fill"></div>
			</div>
			<div class="hscroll">
				<button class="turn-left" aria-label="Scroll left"><svg width="12" height="12"><use href="#i-chev"/></svg></button>
				<div class="thumb"></div>
				<button class="turn-right" aria-label="Scroll right"><svg width="12" height="12"><use href="#i-chev"/></svg></button>
			</div>
			<svg class="grip" width="20" height="20"><path d="M8 17h3v3H8zM12 17h3v3h-3zM16 17h3v3h-3zM12 13h3v3h-3zM16 13h3v3h-3zM16 9h3v3h-3z" fill="#bbb"/></svg>
		</div>
	</section>

	<footer class="statusbar">
		<span>Generates a Database</span>
		<span class="dbms">MySQL 5.0</span>
	</footer>

</body>
</html>
```

FILE: styles.css
```css
* {
	box-sizing: border-box;
	margin: 0;
	padding: 0;
}
body {
	display: flex;
	flex-direction: column;
	height: 100vh;
	overflow: hidden;
	font-family: "Noto Sans", sans-serif;
	font-size: 15px;
	color: #000;
	background: linear-gradient(to right, #d6d2ca, #f5f5f4);
}
button {
	display: flex;
	align-items: center;
	border: 0;
	background: none;
	font: inherit;
	color: inherit;
	white-space: nowrap;
}
svg {
	flex: none;
}
.sprite {
	position: absolute;
}
.ico {
	width: 20px;
	height: 20px;
}

/* title bar */
.titlebar {
	display: flex;
	align-items: center;
	flex: none;
	height: 29px;
	padding: 0 0 2px 2px;
	background: #fff;
}
.titlebar h1 {
	flex: 1;
	padding-left: 5px;
	font-size: 15px;
	font-weight: normal;
}
.window-buttons {
	display: flex;
	gap: 46px;
	padding-right: 27px;
}

/* menu bar */
.menubar {
	display: flex;
	flex: none;
	gap: 1px;
	height: 21px;
	color: #222;
	background: linear-gradient(#fff, #d8d9da);
}
.menubar > button,
.menu-holder > button {
	height: 21px;
	padding: 0 9px 2px;
}
.menu-holder {
	position: relative;
}
.menu-holder > .open {
	padding: 0 8px 2px;
	border: 1px solid #26a0da;
	background: linear-gradient(#c8e2f0, #a6c9de);
}
.menu {
	position: absolute;
	z-index: 10;
	top: 21px;
	left: 0;
	width: 466px;
	padding: 2px 2px 4px;
	border: 1px solid #979797;
	background: linear-gradient(to right, transparent 39px, #d4d4d4 39px, #d4d4d4 40px, transparent 40px) 0 5px / 100% calc(100% - 10px) no-repeat #f0f0f0;
}
.menu button {
	display: grid;
	grid-template-columns: 1fr 116px;
	width: 100%;
	height: 28px;
	padding-left: 43px;
	border: 1px solid transparent;
	text-align: left;
}
.menu .hot {
	border-color: #26a0da;
	background: #c0dcea;
}
.menu button:disabled {
	color: #777;
}
.menu kbd {
	font: inherit;
	color: #666;
}
.menu hr {
	height: 6px;
	border: 0;
	background: linear-gradient(#bdbdbd, #bdbdbd) 0 3px / 100% 1px no-repeat;
}

/* toolbars */
.toolbars {
	display: flex;
	flex: none;
	height: 37px;
	padding: 1px 3px;
	border-bottom: 1px solid #a0a0a0;
	background: #edf0f7;
}
.toolbar {
	display: flex;
	height: 34px;
	border-radius: 4px;
	background: linear-gradient(#fbfbfc, #d6d7d8);
}
.toolbar-main {
	flex: 0 0 863px;
	justify-content: space-between;
}
.tools {
	display: flex;
}
.toolbar button {
	justify-content: center;
	width: 30px;
	height: 30px;
}
.toolbar .on,
.toolbox-body .on {
	border: 1px solid #6482ac;
	border-radius: 2px;
	background: linear-gradient(#bed5f3, #dce9f9);
}
.more {
	align-items: flex-end;
	width: 20px;
	padding: 0 0 3px 4px;
}

/* docked panels */
.panel-head {
	display: flex;
	align-items: center;
	flex: none;
	gap: 8px;
	height: 21px;
	padding: 0 7px 2px 2px;
	color: #c8c4a4;
	background: #808080;
}
.panel-head h2 {
	flex: 1;
	font-size: 15px;
	font-weight: normal;
	line-height: 19px;
}
.workspace {
	display: flex;
	flex: 1;
	min-height: 0;
}

/* object browser */
.browser {
	display: flex;
	flex-direction: column;
	flex: 0 0 300px;
	border: 1px solid #a0a0a0;
	border-width: 1px 0 1px 1px;
	background: #f0f0f0;
}
.browser .panel-head {
	padding-right: 9px;
}
.browser-body {
	display: flex;
	flex-direction: column;
	flex: 1;
	margin: 4px 3px 2px 4px;
	border: 2px solid #696969;
	border-right-color: #e3e3e3;
	border-bottom-color: #e3e3e3;
}
.filter {
	display: flex;
	align-items: center;
	height: 28px;
	padding-left: 5px;
	font-family: "Liberation Sans", Arial, sans-serif;
	font-size: 13px;
}
.filter input {
	width: 193px;
	height: 20px;
	margin: 0 7px 0 5px;
	border: 1px solid #7a7a7a;
	background: #fff;
}
.tree {
	flex: 1;
	padding: 0 0 0 4px;
	border-top: 1px solid #a0a0a0;
	background: #fff;
	font-family: "Liberation Sans", Arial, sans-serif;
	font-size: 14px;
	list-style: none;
}
.tree li {
	display: flex;
	align-items: center;
	height: 18px;
}
.tree .child {
	padding-left: 19px;
}
.tree span {
	padding: 0 2px;
	margin-left: 3px;
	line-height: 18px;
}
.tree .current {
	background: #f0f0f0;
}
.browser-tabs {
	display: flex;
	height: 25px;
	border-top: 1px solid #dcdcdc;
	font-family: "Liberation Mono", monospace;
	font-size: 13px;
}
.browser-tabs button {
	gap: 5px;
	height: 22px;
	padding: 0 4px;
	border: 1px solid #dcdcdc;
	border-width: 1px 1px 0 0;
}
.browser-tabs .active {
	height: 24px;
	padding: 0 8px;
	border-top: 0;
	background: #fff;
}

/* diagram window */
.document {
	display: flex;
	flex-direction: column;
	flex: 1;
	min-width: 0;
	margin: 0 7px 0 8px;
}
.doc-head {
	display: flex;
	align-items: center;
	justify-content: flex-end;
	gap: 10px;
	height: 23px;
	padding-right: 7px;
	color: #222;
}
.frame {
	display: flex;
	flex: 1;
	min-height: 0;
	padding: 3px 2px;
	border: 1px solid #808080;
	border-radius: 6px;
	background: #d4d0c8;
}
.view {
	display: grid;
	grid-template: 1fr 20px / 1fr 20px;
	flex: 1;
	border: 3px solid #808080;
	background: #f0f0f0;
}
.canvas {
	position: relative;
	overflow: hidden;
	background: #fff;
}
.page-line {
	position: absolute;
	top: 0;
	bottom: 0;
	width: 1px;
	background: #000;
}
.line-left {
	left: 246px;
}
.line-right {
	left: 1101px;
}
.reference {
	position: absolute;
	top: 189px;
	left: 478px;
}
.entity {
	width: 179px;
	border: 1px solid #0080c0;
	border-spacing: 0;
	background: linear-gradient(160deg, #fff, #b0d4fc 85%);
	font-family: "Liberation Mono", monospace;
	font-size: 11px;
	line-height: 15px;
}
.entity th {
	height: 20px;
	border-bottom: 1px solid #0080c0;
	font-weight: normal;
}
.entity td {
	padding-left: 4px;
}
.entity td + td {
	padding-left: 8px;
}
.entity tr:nth-child(2) td {
	padding-top: 1px;
}
.entity tr:last-child td {
	padding-bottom: 3px;
}
.entity .key {
	padding-right: 6px;
	text-align: right;
}
.entity .type {
	width: 132px;
	text-align: right;
}
.entity-parent {
	position: absolute;
	top: 161px;
	left: 299px;
}
.entity-parent tr:last-child td {
	padding-bottom: 0;
}
.selected {
	position: absolute;
	top: 160px;
	left: 544px;
}
.handle {
	position: absolute;
	width: 6px;
	height: 6px;
	background: #000;
}
.handle.t {
	top: -3px;
}
.handle.m {
	top: calc(50% - 3px);
}
.handle.b {
	bottom: -3px;
}
.handle.l {
	left: -3px;
}
.handle.c {
	left: calc(50% - 3px);
}
.handle.r {
	right: -3px;
}

/* scroll bars */
.vscroll,
.hscroll {
	display: flex;
	color: #555;
	background: #f0f0f0;
}
.vscroll {
	flex-direction: column;
}
.vscroll button,
.hscroll button {
	justify-content: center;
	flex: none;
	width: 20px;
	height: 20px;
}
.turn-down svg {
	transform: rotate(180deg);
}
.turn-left svg {
	transform: rotate(-90deg);
}
.turn-right svg {
	transform: rotate(90deg);
}
.thumb {
	flex: 1;
	background: #cdcdcd;
}
.view .thumb {
	flex: none;
}
.view .vscroll .thumb {
	height: 20px;
}
.view .hscroll .thumb {
	width: 60px;
}
.track-before,
.track-after {
	flex: 1;
}

/* toolbox */
.toolbox {
	display: flex;
	flex-direction: column;
	flex: 0 0 225px;
	border: 1px solid #a0a0a0;
	background: #f0f0f0;
}
.toolbox-body {
	flex: 1;
	margin: 2px 4px 3px 2px;
	background: linear-gradient(to right, #edf2f8, #fff);
}
.toolbox-views {
	display: flex;
	gap: 1px;
	height: 36px;
	padding: 2px 1px;
	background: linear-gradient(#fbfcfd, #d6d7d8);
}
.toolbox-views button,
.palette button {
	justify-content: center;
	width: 30px;
	height: 30px;
}
.group {
	gap: 5px;
	width: 100%;
	height: 27px;
	padding: 0 0 2px 1px;
	border-top: 1px solid #c8c8c8;
	border-radius: 4px;
	background: linear-gradient(#eaeaea, #f0f0f0);
}
.group.closed {
	background: linear-gradient(#f0f0f0, #dadada);
}
.round {
	display: flex;
	align-items: center;
	justify-content: center;
	width: 24px;
	height: 24px;
	border: 1px solid #333;
	border-radius: 50%;
	background: #fff;
}
.palette {
	display: grid;
	grid-template-columns: repeat(6, 30px);
	gap: 2px;
	padding: 0 0 2px 1px;
}

/* output */
.output {
	display: flex;
	flex-direction: column;
	flex: none;
	height: 251px;
	margin-top: 7px;
	border: 1px solid #a0a0a0;
	border-bottom: 2px solid #a0a0a0;
	background: #f0f0f0;
}
.output-body {
	display: flex;
	flex: 1;
}
.log {
	flex: 1;
	background: #fff;
}
.output-foot {
	display: flex;
	height: 21px;
}
.output-foot .hscroll {
	flex: 1;
	margin-left: 3px;
}
.sheet-tabs {
	display: flex;
	flex: 0 0 897px;
	border-right: 1px solid #000;
	background: #c8c8c8;
	font-family: "Liberation Sans", Arial, sans-serif;
	font-size: 14px;
}
.step {
	justify-content: center;
	width: 21px;
	height: 21px;
	border: 1px solid #000;
	border-left: 0;
	background: #f0f0f0;
}
.sheet {
	padding: 0 3px 2px 2px;
	border-top: 1px solid #666;
	background: #f0f0f0;
}
.sheet.active {
	padding: 0 5px 2px 3px;
	border-top-color: #fff;
	background: #fff;
}
.sheet-fill {
	flex: 1;
	border-top: 1px solid #000;
}

/* status bar */
.statusbar {
	display: flex;
	align-items: center;
	justify-content: space-between;
	flex: none;
	height: 38px;
	padding: 0 15px;
	border-bottom: 2px solid #444;
	background: linear-gradient(#fbfcfd, #d6d7d8);
}
.dbms {
	padding: 0 20px 0 15px;
	border: 1px solid #808080;
	line-height: 28px;
}
```
